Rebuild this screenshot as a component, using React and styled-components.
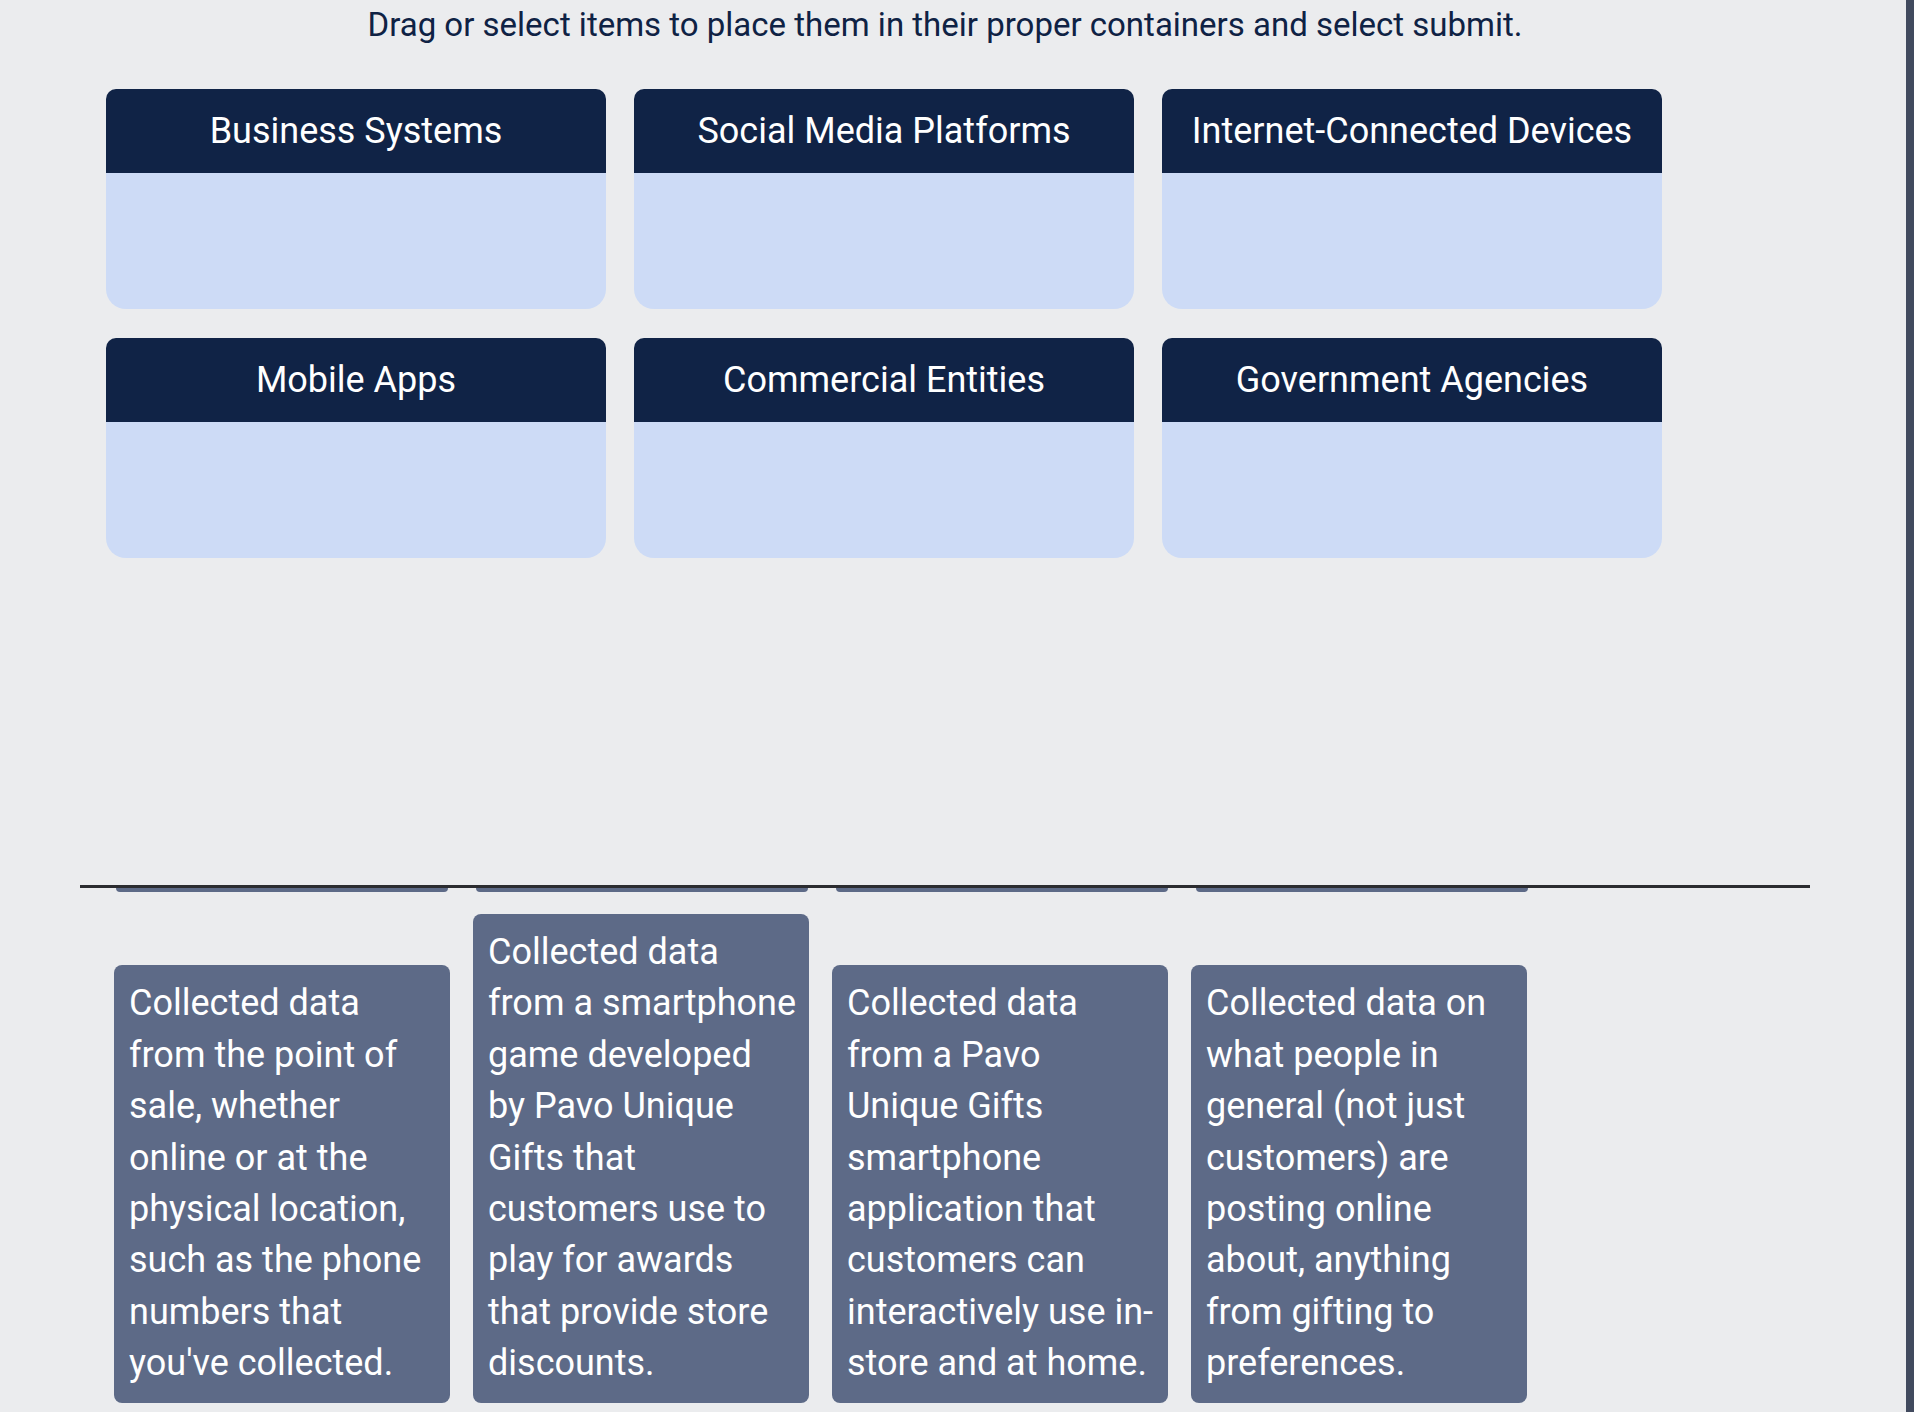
import React from "react";
import styled, { createGlobalStyle } from "styled-components";

const GlobalStyle = createGlobalStyle`
  html, body {
    margin: 0;
    padding: 0;
    background: #ebecee;
  }
  body {
    font-family: Roboto, "Liberation Sans", Arial, sans-serif;
  }
  * {
    box-sizing: border-box;
  }
`;

const PageWrapper = styled.div`
  display: flex;
  min-height: 100vh;
  overflow: hidden;
`;

const Main = styled.main`
  flex: 1;
  display: flex;
  flex-direction: column;
  padding-right: 16px;
`;

const SideRail = styled.div`
  flex: 0 0 8px;
  background: #414a5e;
`;

const Instructions = styled.p`
  margin: 5px 0 0;
  text-align: center;
  font-size: 33px;
  line-height: 40px;
  color: #0f2244;
`;

const Board = styled.div`
  display: grid;
  grid-template-columns: repeat(3, 500px);
  column-gap: 28px;
  row-gap: 29px;
  margin: 44px 0 0 106px;
`;

const Bucket = styled.div`
  display: flex;
  flex-direction: column;
  height: 220px;
`;

const BucketHeader = styled.h2`
  margin: 0;
  height: 84px;
  display: flex;
  align-items: center;
  justify-content: center;
  background: #102346;
  color: #ffffff;
  font-size: 36px;
  font-weight: 400;
  border-radius: 10px 10px 0 0;
`;

const BucketBody = styled.div`
  flex: 1;
  background: #cddbf6;
  border-radius: 0 0 20px 20px;
`;

const Tray = styled.section`
  margin: 327px 80px 0;
  border-top: 3px solid #2b2c30;
`;

const SliverRow = styled.div`
  display: flex;
  gap: 28px;
  padding-left: 36px;
`;

const Sliver = styled.div`
  width: 332px;
  height: 4px;
  background: #5d6a87;
  border-radius: 0 0 6px 6px;
`;

const ItemRow = styled.div`
  display: flex;
  align-items: flex-end;
  gap: 23px;
  padding: 22px 0 0 34px;
`;

const Item = styled.div`
  width: 336px;
  padding: 13px 12px 13px 15px;
  background: #5d6a87;
  color: #ffffff;
  border-radius: 8px;
  font-size: 36px;
  line-height: 51.4px;
`;

const buckets = [
  "Business Systems",
  "Social Media Platforms",
  "Internet-Connected Devices",
  "Mobile Apps",
  "Commercial Entities",
  "Government Agencies",
];

const items = [
  "Collected data from the point of sale, whether online or at the physical location, such as the phone numbers that you've collected.",
  "Collected data from a smartphone game developed by Pavo Unique Gifts that customers use to play for awards that provide store discounts.",
  "Collected data from a Pavo Unique Gifts smartphone application that customers can interactively use in-store and at home.",
  "Collected data on what people in general (not just customers) are posting online about, anything from gifting to preferences.",
];

const App = () => {
  return (
    <PageWrapper>
      <GlobalStyle />
      <Main>
        <Instructions>
          Drag or select items to place them in their proper containers and
          select submit.
        </Instructions>

        <Board>
          {buckets.map(name => (
            <Bucket key={name}>
              <BucketHeader>{name}</BucketHeader>
              <BucketBody />
            </Bucket>
          ))}
        </Board>

        <Tray>
          <SliverRow>
            {items.map((_, i) => (
              <Sliver key={i} />
            ))}
          </SliverRow>
          <ItemRow>
            {items.map((text, i) => (
              <Item key={i}>{text}</Item>
            ))}
          </ItemRow>
        </Tray>
      </Main>
      <SideRail />
    </PageWrapper>
  );
};

export default App;
